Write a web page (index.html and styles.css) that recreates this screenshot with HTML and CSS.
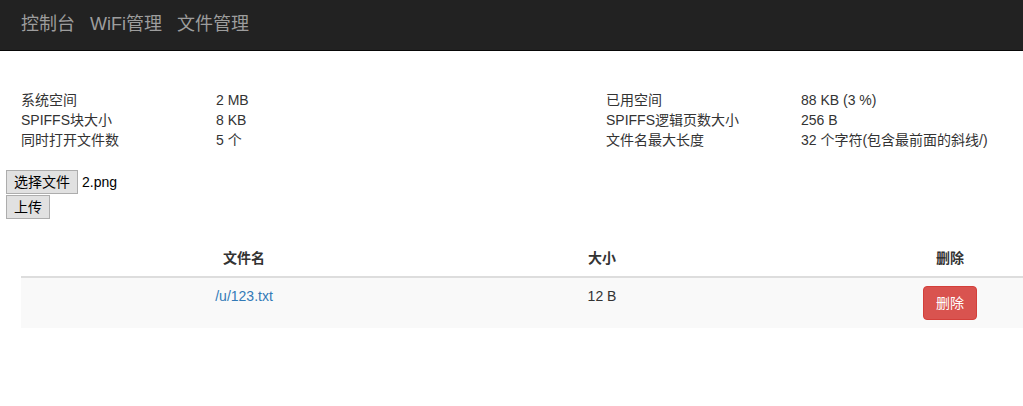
FILE: index.html
```html
<!DOCTYPE html>
<html lang="zh-CN">
<head>
<meta charset="utf-8">
<title>文件管理</title>
<link rel="stylesheet" href="styles.css">
</head>
<body>
<nav class="navbar">
  <a class="nav-item" href="#">控制台</a>
  <a class="nav-item" href="#">WiFi管理</a>
  <a class="nav-item" href="#">文件管理</a>
</nav>
<section class="info">
  <div class="info-grid">
    <div>系统空间</div><div>2 MB</div><div>已用空间</div><div>88 KB (3 %)</div>
    <div>SPIFFS块大小</div><div>8 KB</div><div>SPIFFS逻辑页数大小</div><div>256 B</div>
    <div>同时打开文件数</div><div>5 个</div><div>文件名最大长度</div><div>32 个字符(包含最前面的斜线/)</div>
  </div>
</section>
<form class="upload">
  <div class="file-row"><button type="button" class="native-btn">选择文件</button><span class="file-name">2.png</span></div>
  <div><button type="button" class="native-btn">上传</button></div>
</form>
<div class="table-wrap">
<table class="files">
  <thead>
    <tr><th class="c1">文件名</th><th class="c2">大小</th><th class="c3">删除</th></tr>
  </thead>
  <tbody>
    <tr><td class="c1"><a href="#" class="link">/u/123.txt</a></td><td class="c2">12 B</td><td class="c3"><button type="button" class="btn-danger">删除</button></td></tr>
  </tbody>
</table>
</div>
</body>
</html>
```
FILE: styles.css
```css
html, body {
  margin: 0;
  padding: 0;
  overflow: hidden;
}
body {
  font-family: "Liberation Sans", Arial, "Noto Sans CJK SC", sans-serif;
  font-size: 14px;
  line-height: 20px;
  color: #333;
  background: #fff;
  width: 1023px;
}
.navbar {
  height: 50px;
  background: #222;
  border-bottom: 1px solid #080808;
  display: flex;
  align-items: center;
  padding-left: 21px;
  gap: 15px;
}
.nav-item {
  color: #9d9d9d;
  font-size: 18px;
  line-height: 20px;
  text-decoration: none;
  position: relative;
  top: -1px;
}
.info {
  padding: 39px 0 0 21px;
}
.info-grid {
  display: grid;
  grid-template-columns: 195px 390px 195px 1fr;
}
.upload {
  margin-top: 20px;
  padding-left: 6px;
}
.file-row {
  display: flex;
  align-items: center;
}
.native-btn {
  font-family: inherit;
  font-size: 14px;
  line-height: 20px;
  color: #000;
  background: #e1e1e1;
  border: 1px solid #adadad;
  border-radius: 0;
  padding: 1px 7px;
  margin: 0;
  height: 24px;
  display: block;
}
.upload > div + div {
  margin-top: 1px;
}
.file-name {
  margin-left: 4px;
  color: #000;
}
.table-wrap {
  margin: 21px 0 0 21px;
  width: 1002px;
  overflow: hidden;
}
.files {
  border-collapse: collapse;
  border-spacing: 0;
  width: 1142px;
}
.files th, .files td {
  padding: 8px;
  vertical-align: top;
  text-align: center;
}
.files th {
  font-weight: bold;
  border-bottom: 2px solid #ddd;
}
.files tbody tr {
  background: #f9f9f9;
}
.c1 { width: 430px; }
.c2 { width: 254px; }
.c3 { width: 410px; }
.link {
  color: #337ab7;
  text-decoration: none;
}
.btn-danger {
  font-family: inherit;
  font-size: 14px;
  line-height: 20px;
  color: #fff;
  background: #d9534f;
  border: 1px solid #d43f3a;
  border-radius: 4px;
  padding: 6px 12px;
  margin: 0;
  height: 34px;
}
```
